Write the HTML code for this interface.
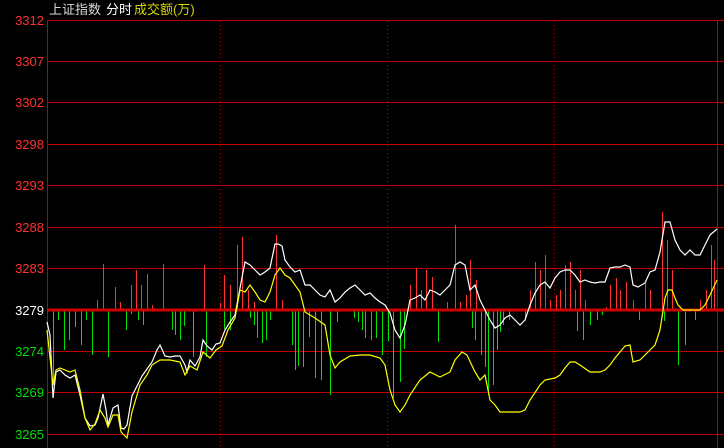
<!DOCTYPE html>
<html><head><meta charset="utf-8"><style>
html,body{margin:0;padding:0;background:#000;width:724px;height:448px;overflow:hidden}
.t{font-family:"Liberation Sans","Noto Sans CJK SC",sans-serif;font-size:13px}
</style></head><body>
<svg width="724" height="448" xmlns="http://www.w3.org/2000/svg" style="position:absolute;left:0;top:0">
<rect width="724" height="448" fill="#000"/>
<g stroke="#c00000" stroke-width="1" shape-rendering="crispEdges">
<line x1="47" y1="20.5" x2="724" y2="20.5"/>
<line x1="47" y1="61.5" x2="724" y2="61.5"/>
<line x1="47" y1="102.5" x2="724" y2="102.5"/>
<line x1="47" y1="144.5" x2="724" y2="144.5"/>
<line x1="47" y1="185.5" x2="724" y2="185.5"/>
<line x1="47" y1="227.5" x2="724" y2="227.5"/>
<line x1="47" y1="268.5" x2="724" y2="268.5"/>
<line x1="47" y1="351.5" x2="724" y2="351.5"/>
<line x1="47" y1="392.5" x2="724" y2="392.5"/>
<line x1="47" y1="434.5" x2="724" y2="434.5"/>
<line x1="47.5" y1="20" x2="47.5" y2="448"/>
<line x1="717.5" y1="20" x2="717.5" y2="448"/>
</g>
<g stroke="#c00000" stroke-width="1" stroke-dasharray="1,3" shape-rendering="crispEdges">
<line x1="220.5" y1="21" x2="220.5" y2="448"/>
<line x1="387.5" y1="21" x2="387.5" y2="448"/>
<line x1="554.5" y1="21" x2="554.5" y2="448"/>
</g>
<g stroke="#ff3232" stroke-width="1" shape-rendering="crispEdges" id="r">
<path d="M97.5 310V300M103.5 310V264M115.5 310V287M120.5 310V302M131.5 310V285M136.5 310V270M141.5 310V285M147.5 310V274M152.5 310V305M163.5 310V264M204.5 310V265M220.5 310V303M224.5 310V275M230.5 310V285M237.5 310V245M242.5 310V237M248.5 310V290M254.5 310V302M276.5 310V235M282.5 310V300M410.5 310V285M416.5 310V268M421.5 310V290M426.5 310V270M432.5 310V277M447.5 310V302M455.5 310V225M460.5 310V302M466.5 310V295M470.5 310V260M476.5 310V280M530.5 310V290M535.5 310V262M540.5 310V270M545.5 310V255M550.5 310V300M556.5 310V295M560.5 310V290M565.5 310V265M570.5 310V262M575.5 310V290M580.5 310V270M585.5 310V300M606.5 310V307M610.5 310V285M616.5 310V278M620.5 310V290M626.5 310V282M633.5 310V300M645.5 310V283M650.5 310V290M662.5 310V212M667.5 310V240M672.5 310V270M700.5 310V300M706.5 310V290M711.5 310V245M714.5 310V260"/>
</g>
<g stroke="#00e000" stroke-width="1" shape-rendering="crispEdges">
<path d="M53.5 311V385M58.5 311V320M64.5 311V350M69.5 311V340M75.5 311V327M81.5 311V345M86.5 311V320M92.5 311V355M108.5 311V357M126.5 311V330M131.5 311V314M138.5 311V320M143.5 311V325M157.5 311V310M172.5 311V330M175.5 311V335M180.5 311V340M184.5 311V326M193.5 311V357M206.5 311V357M224.5 311V329M230.5 311V330M250.5 311V318M254.5 311V325M257.5 311V338M262.5 311V343M266.5 311V340M270.5 311V320M292.5 311V345M295.5 311V370M298.5 311V366M303.5 311V367M309.5 311V337M315.5 311V378M321.5 311V380M330.5 311V395M337.5 311V322M354.5 311V318M358.5 311V322M362.5 311V330M365.5 311V338M371.5 311V340M376.5 311V338M382.5 311V355M388.5 311V341M393.5 311V398M400.5 311V382M404.5 311V349M438.5 311V342M472.5 311V328M475.5 311V340M481.5 311V355M485.5 311V367M488.5 311V395M493.5 311V385M497.5 311V350M500.5 311V332M503.5 311V325M509.5 311V320M525.5 311V318M577.5 311V331M583.5 311V340M590.5 311V325M597.5 311V320M602.5 311V315M639.5 311V320M664.5 311V321M678.5 311V365M685.5 311V345M695.5 311V320"/>
</g>
<line x1="47" y1="310" x2="724" y2="310" stroke="#d00000" stroke-width="3" shape-rendering="crispEdges"/>
<polyline fill="none" stroke="#fff" stroke-width="1.2" points="47,322 50,335 53,398 56,372 60,370 65,375 70,378 75,375 80,395 85,418 90,426 95,425 98,418 103,394 106,410 108,425 113,408 118,405 121,428 124,429 127,425 132,396 137,386 142,376 147,369 152,362 157,350 160,345 165,356 170,357 175,356 180,356 185,365 187,372 190,360 195,366 200,357 203,340 207,346 212,350 216,344 220,343 225,330 230,322 235,315 240,288 245,262 250,265 255,270 260,275 265,272 270,268 275,244 278,244 282,246 285,260 290,267 295,272 300,270 305,285 310,285 315,290 320,295 325,297 330,290 335,302 340,298 345,292 350,288 355,285 360,290 365,295 370,293 375,298 380,302 385,305 390,313 395,330 400,338 405,325 410,300 415,298 420,295 425,300 430,290 435,292 440,295 445,290 450,285 455,265 460,262 465,265 470,290 475,285 480,300 485,310 490,320 495,328 500,325 505,318 510,315 515,320 520,325 525,320 530,305 535,293 540,285 545,282 550,288 555,278 560,272 565,270 570,270 575,275 580,282 585,280 590,282 595,283 600,282 605,282 610,268 615,267 620,267 625,265 630,267 633,285 638,287 645,283 650,272 655,270 660,252 665,222 670,222 675,240 680,250 685,255 690,250 695,255 700,255 705,245 710,235 717,229"/>
<polyline fill="none" stroke="#ffff00" stroke-width="1.2" points="47,330 53,385 56,370 60,368 70,372 75,370 80,390 85,418 90,430 95,424 100,410 105,418 108,427 113,415 118,415 121,432 127,438 132,412 140,385 147,375 152,365 160,360 170,360 180,362 185,375 190,366 197,370 203,352 210,358 216,350 222,346 228,330 235,318 240,290 245,292 250,285 255,292 260,300 265,302 270,292 275,275 280,268 285,275 290,278 300,292 305,312 315,318 325,325 330,355 335,368 340,362 350,356 360,355 370,355 380,358 385,365 390,390 395,405 400,412 405,405 410,395 420,380 430,372 440,377 450,372 455,360 462,352 467,355 475,372 480,380 485,375 490,400 495,405 500,412 510,412 520,412 525,410 530,400 540,385 545,380 555,378 560,375 565,368 570,362 575,362 580,365 590,372 600,372 605,370 610,365 615,358 620,352 625,346 630,345 633,362 640,360 645,355 650,350 655,345 660,330 665,298 668,290 672,290 675,298 678,305 683,310 690,310 700,310 705,305 710,295 717,280"/>
<g class="t" text-anchor="end">
<text x="44" y="25" fill="#ff3232">3312</text>
<text x="44" y="66" fill="#ff3232">3307</text>
<text x="44" y="107" fill="#ff3232">3302</text>
<text x="44" y="149" fill="#ff3232">3298</text>
<text x="44" y="190" fill="#ff3232">3293</text>
<text x="44" y="232" fill="#ff3232">3288</text>
<text x="44" y="273" fill="#ff3232">3283</text>
<text x="44" y="315" fill="#ffffff">3279</text>
<text x="44" y="356" fill="#00e000">3274</text>
<text x="44" y="397" fill="#00e000">3269</text>
<text x="44" y="439" fill="#00e000">3265</text>
</g>
<text class="t" x="49" y="14" fill="#d8d8d8">上证指数</text>
<text class="t" x="106" y="14" fill="#ffffff">分时</text>
<text class="t" x="134" y="14" fill="#d8d800">成交额(万)</text>
</svg>
</body></html>
